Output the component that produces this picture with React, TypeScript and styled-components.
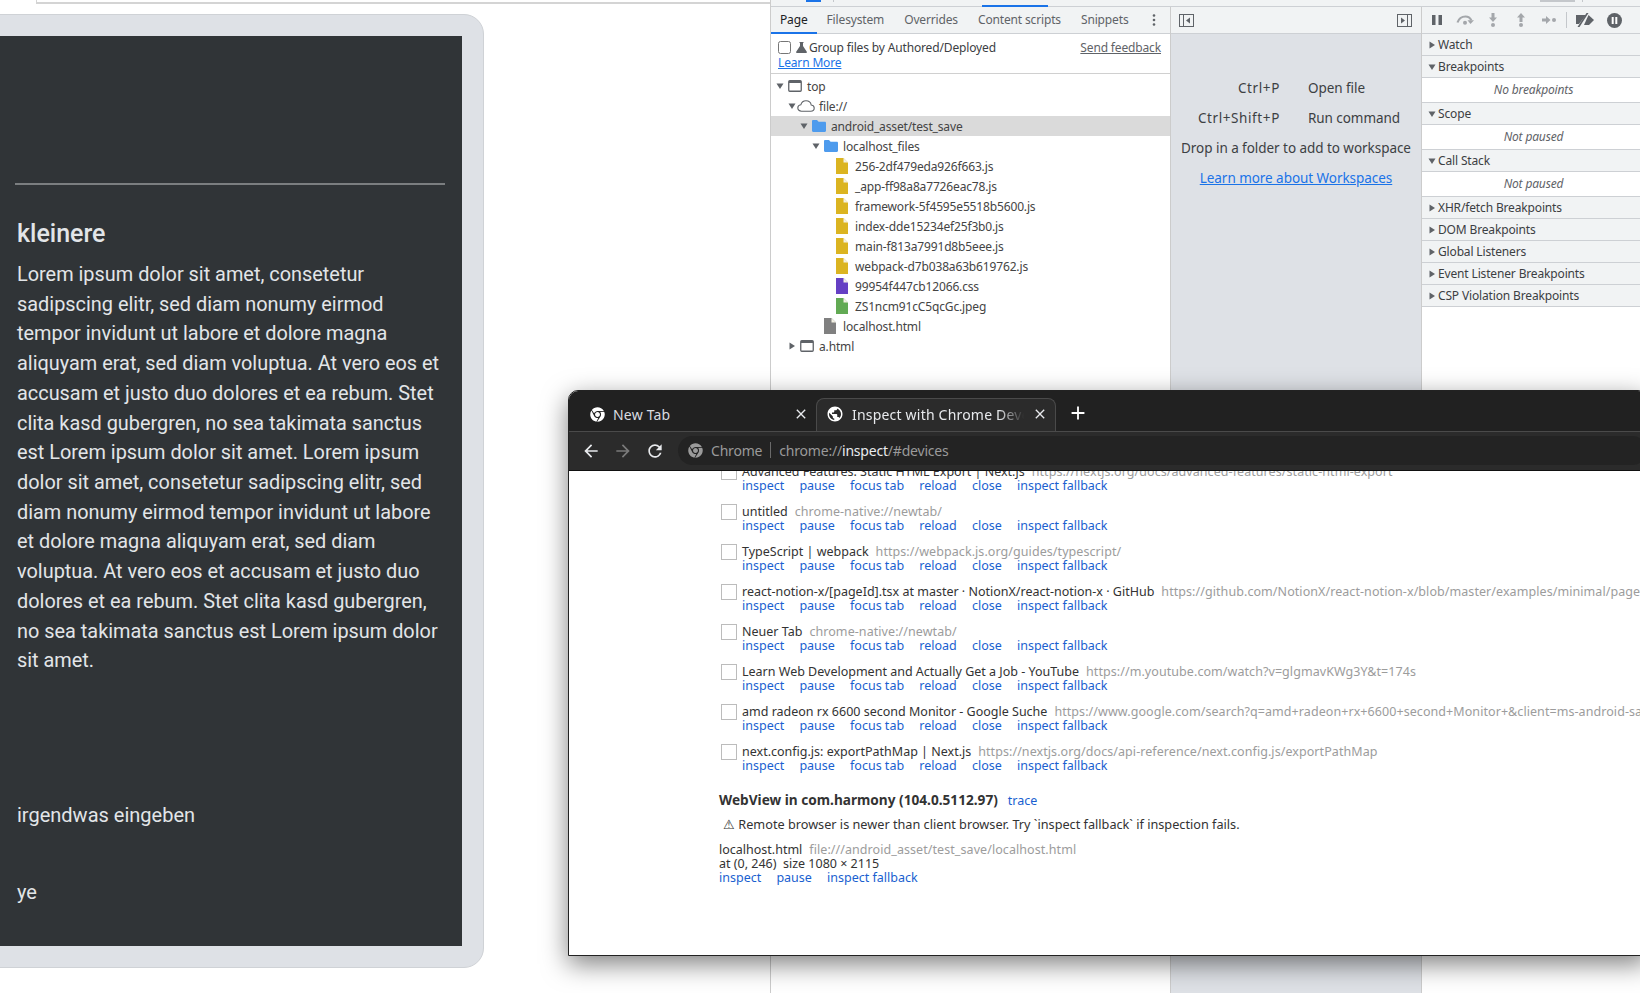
import React from 'react'
import styled, { createGlobalStyle } from 'styled-components'
import { FaChrome } from 'react-icons/fa'
import { MdAdd, MdArrowBack, MdArrowForward, MdClose, MdPublic, MdRefresh } from 'react-icons/md'

const GlobalStyle = createGlobalStyle`
  html, body {
    margin: 0;
    padding: 0;
    background: #fff;
    overflow: hidden;
  }
  * {
    box-sizing: border-box;
  }
`

const UI_FONT = `"Noto Sans", "Open Sans", sans-serif`

const Page = styled.div`
  position: relative;
  display: flex;
  width: 1640px;
  height: 993px;
  overflow: hidden;
  background: #fff;
  font-family: ${UI_FONT};
`

/* left half: the device preview */
const PreviewPane = styled.div`
  width: 770px;
  flex: none;
  display: flex;
  flex-direction: column;
`

const PreviewTopBar = styled.div`
  height: 4px;
  margin-left: 36px;
  border-left: 1px solid #d4d4d4;
  border-bottom: 2px solid #d4d4d4;
`

const DeviceFrame = styled.div`
  width: 514px;
  height: 954px;
  margin: 10px 0 0 -30px;
  padding: 21px 21px 21px 29px;
  background: #dee1e6;
  border: 1px solid #cfd2d6;
  border-radius: 20px;
`

const DeviceScreen = styled.div`
  height: 100%;
  padding: 0 0 0 17px;
  overflow: hidden;
  background: #303437;
  color: #e2e5e8;
  font-family: Roboto, sans-serif;
`

const ScreenDivider = styled.div`
  width: 430px;
  height: 2px;
  margin: 147px 0 0 -2px;
  background: #7b7e80;
`

const ScreenHeading = styled.h2`
  margin: 33px 0 0;
  font-size: 25px;
  line-height: 32px;
  font-weight: 500;
`

const ScreenBody = styled.p`
  width: 424px;
  margin: 10px 0 0;
  font-size: 19.9px;
  line-height: 29.72px;
`

const ScreenLine = styled.p<{ $gap: number }>`
  margin: ${(p) => p.$gap}px 0 0;
  font-size: 20px;
  line-height: 30px;
`

/* devtools */
const DevTools = styled.div`
  flex: 1;
  display: flex;
  flex-direction: column;
  border-left: 1px solid #ccc;
  background: #fff;
  color: #3c4043;
  font-size: 12px;
  letter-spacing: -0.15px;
`

const MainTabStrip = styled.div`
  position: relative;
  height: 7px;
  flex: none;
  background: #f1f3f4;
  border-bottom: 1px solid #cdd0d4;
`

const MainTabUnderline = styled.div`
  position: absolute;
  left: 211px;
  bottom: -1px;
  width: 66px;
  height: 2px;
  background: #1a73e8;
`

const StripMark = styled.div<{ $left: number; $width: number; $color: string }>`
  position: absolute;
  top: 0;
  left: ${(p) => p.$left}px;
  width: ${(p) => p.$width}px;
  height: 2px;
  background: ${(p) => p.$color};
`

const Panels = styled.div`
  flex: 1;
  display: grid;
  grid-template-columns: 399px 251px 1fr;
  min-height: 0;
`

const Panel = styled.div<{ $bg?: string }>`
  display: flex;
  flex-direction: column;
  min-width: 0;
  background: ${(p) => p.$bg || '#fff'};
  & + & {
    border-left: 1px solid #ccc;
  }
`

const ToolBar = styled.div`
  height: 27px;
  flex: none;
  display: flex;
  align-items: center;
  background: #f1f3f4;
  border-bottom: 1px solid #cdd0d4;
`

const NavTab = styled.div<{ $active?: boolean }>`
  align-self: stretch;
  display: flex;
  align-items: center;
  padding: 0 ${(p) => (p.$active ? 9 : 10)}px;
  margin-bottom: -1px;
  color: ${(p) => (p.$active ? '#202124' : '#5f6368')};
  border-bottom: 2px solid ${(p) => (p.$active ? '#1a73e8' : 'transparent')};
  white-space: nowrap;
`

const ToolSpacer = styled.div`
  flex: 1;
`

const GroupBar = styled.div`
  height: 40px;
  flex: none;
  padding: 6px 9px 0 7px;
  border-bottom: 1px solid #d0d0d0;
  line-height: 15px;
`

const GroupRow = styled.div`
  display: flex;
  align-items: center;
  height: 15px;
`

const FakeCheck = styled.span`
  width: 13px;
  height: 13px;
  margin-right: 5px;
  background: #fff;
  border: 1px solid #767676;
  border-radius: 2.5px;
`

const GroupLabel = styled.span`
  margin-left: 2px;
`

const FeedbackLink = styled.span`
  margin-left: auto;
  color: #5f6368;
  text-decoration: underline;
`

const BlueLink = styled.span`
  color: #1a73e8;
  text-decoration: underline;
`

const Tree = styled.div`
  padding-top: 2px;
`

const TreeRow = styled.div<{ $depth: number; $selected?: boolean }>`
  height: 20px;
  display: flex;
  align-items: center;
  padding-left: ${(p) => 5 + p.$depth * 12}px;
  background: ${(p) => (p.$selected ? '#dadada' : 'transparent')};
  white-space: nowrap;
`

const TreeArrowSlot = styled.span`
  width: 12px;
  flex: none;
  display: flex;
  align-items: center;
`

const TreeLabel = styled.span<{ $file?: boolean }>`
  margin-left: ${(p) => (p.$file ? 7 : 5)}px;
  color: #444;
`

const CloudSlot = styled.span`
  display: flex;
  margin: 0 -1px 0 -3px;
`

const CenterHelp = styled.div`
  flex: 1;
  display: flex;
  flex-direction: column;
  align-items: center;
  padding-top: 44px;
  background: #dee1e6;
  font-size: 13.5px;
  line-height: 20px;
  letter-spacing: -0.05px;
  color: #3c4043;
`

const ShortcutGrid = styled.div`
  display: grid;
  grid-template-columns: 92px auto;
  column-gap: 28px;
  row-gap: 10px;
  margin-right: 4px;
`

const ShortcutKey = styled.span`
  text-align: right;
  white-space: nowrap;
  letter-spacing: 0.6px;
`

const HelpLine = styled.div`
  margin-top: 10px;
  white-space: nowrap;
`

const DebugIcon = styled.span<{ $left?: number; $right?: number }>`
  display: flex;
  margin-left: ${(p) => p.$left || 0}px;
  margin-right: ${(p) => p.$right || 0}px;
`

const DebugDivider = styled.span`
  width: 1px;
  height: 16px;
  margin-left: 10px;
  background: #c4c7cb;
`

const SectionHeader = styled.div`
  height: 22px;
  flex: none;
  display: flex;
  align-items: center;
  padding-left: 6px;
  gap: 2px;
  background: #f1f3f4;
  border-bottom: 1px solid #cdd0d4;
  color: #3c4043;
`

const SectionBody = styled.div`
  height: 25px;
  flex: none;
  display: flex;
  align-items: center;
  justify-content: center;
  padding: 0 0 2px 5px;
  border-bottom: 1px solid #cdd0d4;
  font-style: italic;
  color: #5f6368;
`

/* floating browser window */
const BrowserWindow = styled.div`
  position: absolute;
  left: 568px;
  top: 390px;
  width: 1080px;
  height: 566px;
  display: flex;
  flex-direction: column;
  background: #fff;
  border: 1px solid #222;
  border-radius: 10px 10px 0 0;
  box-shadow: 0 8px 26px rgba(0, 0, 0, 0.5);
  font-size: 12.5px;
  overflow: hidden;
`

const BrowserTabs = styled.div`
  height: 40px;
  flex: none;
  display: flex;
  align-items: flex-end;
  padding-left: 8px;
  background: #212121;
  color: #dadce0;
  font-size: 14px;
`

const BrowserTab = styled.div<{ $active?: boolean; $width: number }>`
  width: ${(p) => p.$width}px;
  height: 33px;
  display: flex;
  align-items: center;
  gap: 8px;
  padding: 0 ${(p) => (p.$active ? 7 : 6)}px 2px ${(p) => (p.$active ? 9 : 12)}px;
  background: ${(p) => (p.$active ? '#2b2b2b' : 'transparent')};
  border: 1px solid ${(p) => (p.$active ? '#4a4a4a' : 'transparent')};
  border-bottom: none;
  border-radius: 8px 8px 0 0;
  color: ${(p) => (p.$active ? '#e8eaed' : '#dadce0')};
  white-space: nowrap;
  letter-spacing: 0.2px;
`

const TabTitle = styled.span<{ $fade?: boolean }>`
  flex: 1;
  min-width: 0;
  overflow: hidden;
  ${(p) => (p.$fade ? 'mask-image: linear-gradient(to right, #000 85%, transparent 100%);' : '')}
`

const NewTabButton = styled.span`
  display: flex;
  margin: 0 0 7px 11px;
  color: #fff;
`

const BrowserToolbar = styled.div`
  height: 40px;
  flex: none;
  display: flex;
  align-items: center;
  padding: 0 0 1px 12px;
  gap: 12px;
  background: #2b2b2b;
  border-top: 1px solid #4a4a4a;
  border-bottom: 1px solid #111;
`

const NavButton = styled.span<{ $dim?: boolean }>`
  display: flex;
  color: ${(p) => (p.$dim ? '#7a7a7a' : '#e8eaed')};
`

const AddressBar = styled.div`
  flex: 1;
  height: 29px;
  display: flex;
  align-items: center;
  padding: 0 0 1px 10px;
  margin-left: 1px;
  gap: 8px;
  border-radius: 15px;
  background: #232323;
  color: #9a9a9a;
  font-size: 14px;
  letter-spacing: -0.2px;
`

const AddressDivider = styled.span`
  width: 1px;
  height: 16px;
  background: #6a6a6a;
`

const AddressStrong = styled.span`
  color: #e8eaed;
`

const BrowserContent = styled.div`
  flex: 1;
  min-height: 0;
  overflow: hidden;
  padding-left: 150px;
  color: #333;
  line-height: 14px;
`

const TargetList = styled.div`
  margin: -6px 0 0 2px;
`

const TargetRow = styled.div`
  display: flex;
  height: 40px;
`

const TargetCheck = styled.span`
  width: 16px;
  height: 16px;
  flex: none;
  margin: -1px 5px 0 0;
  background: #fff;
  border: 1px solid #bcbcbc;
`

const TargetText = styled.div`
  min-width: 0;
  white-space: nowrap;
`

const TargetTitle = styled.span`
  margin-right: 7px;
`

const TargetUrl = styled.span`
  color: #9c9c9c;
  letter-spacing: 0.07px;
`

const LinkRow = styled.div`
  display: flex;
  gap: 15.2px;
  color: #1a5fd0;
  white-space: nowrap;
`

const WebViewHeading = styled.div`
  display: flex;
  align-items: baseline;
  gap: 10px;
  margin-top: 6px;
  font-size: 13.65px;
  line-height: 18px;
  font-weight: 700;
`

const TraceLink = styled.span`
  color: #1a5fd0;
  font-weight: 400;
  font-size: 12.5px;
`

const WarningLine = styled.div`
  margin: 7px 0 12px 4px;
  font-size: 12.7px;
  white-space: nowrap;
`

const FILES = [
  { name: '256-2df479eda926f663.js', color: '#dbb421' },
  { name: '_app-ff98a8a7726eac78.js', color: '#dbb421' },
  { name: 'framework-5f4595e5518b5600.js', color: '#dbb421' },
  { name: 'index-dde15234ef25f3b0.js', color: '#dbb421' },
  { name: 'main-f813a7991d8b5eee.js', color: '#dbb421' },
  { name: 'webpack-d7b038a63b619762.js', color: '#dbb421' },
  { name: '99954f447cb12066.css', color: '#6540c4' },
  { name: 'ZS1ncm91cC5qcGc.jpeg', color: '#62aa54' },
]

const TARGETS = [
  { title: 'Advanced Features: Static HTML Export | Next.js', url: 'https://nextjs.org/docs/advanced-features/static-html-export' },
  { title: 'untitled', url: 'chrome-native://newtab/' },
  { title: 'TypeScript | webpack', url: 'https://webpack.js.org/guides/typescript/' },
  { title: 'react-notion-x/[pageId].tsx at master · NotionX/react-notion-x · GitHub', url: 'https://github.com/NotionX/react-notion-x/blob/master/examples/minimal/pages/[pageId].tsx' },
  { title: 'Neuer Tab', url: 'chrome-native://newtab/' },
  { title: 'Learn Web Development and Actually Get a Job - YouTube', url: 'https://m.youtube.com/watch?v=glgmavKWg3Y&t=174s' },
  { title: 'amd radeon rx 6600 second Monitor - Google Suche', url: 'https://www.google.com/search?q=amd+radeon+rx+6600+second+Monitor+&client=ms-android-samsung' },
  { title: 'next.config.js: exportPathMap | Next.js', url: 'https://nextjs.org/docs/api-reference/next.config.js/exportPathMap' },
]

const SECTIONS_BOTTOM = ['XHR/fetch Breakpoints', 'DOM Breakpoints', 'Global Listeners', 'Event Listener Breakpoints', 'CSP Violation Breakpoints']

const Arrow = ({ open }: { open?: boolean }) => (
  <svg width="8" height="8" viewBox="0 0 8 8" fill="#5f6368">
    {open ? <path d="M0.5 1.5h7L4 7z" /> : <path d="M1.5 0.5v7L7 4z" />}
  </svg>
)

const FrameIcon = () => (
  <svg width="14" height="12" viewBox="0 0 14 12" fill="none" stroke="#5f6368">
    <rect x="0.75" y="0.75" width="12.5" height="10.5" rx="1" strokeWidth="1.3" />
    <path d="M1 2h12" strokeWidth="2" />
  </svg>
)

const CloudIcon = () => (
  <svg width="18" height="12" viewBox="0 0 18 12" fill="none" stroke="#5f6368" strokeWidth="1.1">
    <path d="M4.500 11.200C2.400 11.200 0.800 9.800 0.800 8c0-1.700 1.300-3 3-3.200C4.500 2.500 6.600 0.800 9 0.800c2.700 0 4.800 1.800 5.200 4.200 1.700 0.200 3 1.400 3 3 0 1.800-1.500 3.200-3.400 3.200z" />
  </svg>
)

const FolderIcon = () => (
  <svg width="14" height="12" viewBox="0 0 14 12" fill="#4e9bed">
    <path d="M0 1.200C0 0.500 0.500 0 1.200 0h3.800l1.600 1.800h6.200c0.700 0 1.200 0.500 1.200 1.200v7.800c0 0.700-0.500 1.200-1.200 1.200H1.200C0.500 12 0 11.500 0 10.800z" />
  </svg>
)

const FileIcon = ({ color }: { color: string }) => (
  <svg width="12" height="16" viewBox="0 0 12 16">
    <path d="M0 0h7.500L12 4.500V16H0z" fill={color} />
    <path d="M7.500 0L12 4.500H7.500z" fill="#f3f1e4" />
  </svg>
)

const FlaskIcon = () => (
  <svg width="11" height="11" viewBox="0 0 11 11" fill="#5f6368">
    <path d="M3.500 0h4v1H7v3l3.800 5.800c0.300 0.500 0 1.200-0.700 1.200H0.900C0.200 11-0.100 10.300 0.200 9.800L4 4V1h-0.500z" />
  </svg>
)

const DotsIcon = () => (
  <svg width="4" height="12" viewBox="0 0 4 12" fill="#5f6368">
    <circle cx="2" cy="1.500" r="1.300" />
    <circle cx="2" cy="6" r="1.300" />
    <circle cx="2" cy="10.500" r="1.300" />
  </svg>
)

const SidebarToggle = ({ right }: { right?: boolean }) => (
  <svg width="15" height="13" viewBox="0 0 15 13" fill="none">
    <rect x="0.500" y="0.500" width="14" height="12" stroke="#5f6368" />
    {right ? <path d="M10.500 0.500v12" stroke="#5f6368" /> : <path d="M4.500 0.500v12" stroke="#5f6368" />}
    {right ? <path d="M4 3.500v6l4-3z" fill="#5f6368" /> : <path d="M11 3.500v6l-4-3z" fill="#5f6368" />}
  </svg>
)

const PauseIcon = () => (
  <svg width="10" height="10" viewBox="0 0 10 10" fill="#5f6368">
    <rect width="3.500" height="10" />
    <rect x="6.500" width="3.500" height="10" />
  </svg>
)

const StepOverIcon = () => (
  <svg width="18" height="10" viewBox="0 0 18 10" fill="none">
    <path d="M1.500 7.500C3 3 6.500 1.500 9.500 1.500c2.800 0 4.700 1.500 5.800 3.800" stroke="#a4a7ab" strokeWidth="2.200" />
    <path d="M11.500 5.200h6.500l-3.500 3.800z" fill="#a4a7ab" />
    <circle cx="9" cy="7.800" r="2" fill="#a4a7ab" />
  </svg>
)

const StepIntoIcon = ({ up }: { up?: boolean }) => (
  <svg width="8" height="14" viewBox="0 0 8 14" fill="#a4a7ab">
    {up ? (
      <>
        <path d="M4 0l4 4.500H5.500V9h-3V4.500H0z" />
        <circle cx="4" cy="12" r="2" />
      </>
    ) : (
      <>
        <path d="M2.500 0h3v4.500H8l-4 4.500-4-4.500h2.500z" />
        <circle cx="4" cy="12" r="2" />
      </>
    )}
  </svg>
)

const StepIcon = () => (
  <svg width="14" height="8" viewBox="0 0 14 8" fill="#a4a7ab">
    <path d="M0 2.500h4V0l4.500 4L4 8V5.500H0z" />
    <circle cx="12" cy="4" r="2" />
  </svg>
)

const DeactivateIcon = () => (
  <svg width="18" height="14" viewBox="0 0 18 14" fill="#5f6368">
    <path d="M0 2h10l-7 9H0z" />
    <path d="M12.500 2l5.500 5-5 5H8z" />
    <path d="M1.500 14L10.500 0h2L3.500 14z" />
  </svg>
)

const PauseExceptionIcon = () => (
  <svg width="15" height="15" viewBox="0 0 15 15">
    <circle cx="7.500" cy="7.500" r="7.500" fill="#5f6368" />
    <rect x="4.700" y="4" width="2" height="7" fill="#fff" />
    <rect x="8.300" y="4" width="2" height="7" fill="#fff" />
  </svg>
)

const App: React.FC = () => {
  return (
    <Page>
      <GlobalStyle />
      <PreviewPane>
        <PreviewTopBar />
        <DeviceFrame>
          <DeviceScreen>
            <ScreenDivider />
            <ScreenHeading>kleinere</ScreenHeading>
            <ScreenBody>
              Lorem ipsum dolor sit amet, consetetur sadipscing elitr, sed diam nonumy eirmod tempor invidunt ut
              labore et dolore magna aliquyam erat, sed diam voluptua. At vero eos et accusam et justo duo dolores et
              ea rebum. Stet clita kasd gubergren, no sea takimata sanctus est Lorem ipsum dolor sit amet. Lorem ipsum
              dolor sit amet, consetetur sadipscing elitr, sed diam nonumy eirmod tempor invidunt ut labore et dolore
              magna aliquyam erat, sed diam voluptua. At vero eos et accusam et justo duo dolores et ea rebum. Stet
              clita kasd gubergren, no sea takimata sanctus est Lorem ipsum dolor sit amet.
            </ScreenBody>
            <ScreenLine $gap={124}>irgendwas eingeben</ScreenLine>
            <ScreenLine $gap={47}>ye</ScreenLine>
          </DeviceScreen>
        </DeviceFrame>
      </PreviewPane>

      <DevTools>
        <MainTabStrip>
          <StripMark $left={35} $width={15} $color="#1a73e8" />
          <StripMark $left={62} $width={1} $color="#c4c7cb" />
          <StripMark $left={769} $width={35} $color="#c4c7cb" />
          <StripMark $left={811} $width={1} $color="#c4c7cb" />
          <MainTabUnderline />
        </MainTabStrip>
        <Panels>
          <Panel>
            <ToolBar>
              <NavTab $active>Page</NavTab>
              <NavTab>Filesystem</NavTab>
              <NavTab>Overrides</NavTab>
              <NavTab>Content scripts</NavTab>
              <NavTab>Snippets</NavTab>
              <ToolSpacer />
              <DebugIcon $right={14}>
                <DotsIcon />
              </DebugIcon>
            </ToolBar>
            <GroupBar>
              <GroupRow>
                <FakeCheck />
                <FlaskIcon />
                <GroupLabel>Group files by Authored/Deployed</GroupLabel>
                <FeedbackLink>Send feedback</FeedbackLink>
              </GroupRow>
              <BlueLink>Learn More</BlueLink>
            </GroupBar>
            <Tree>
              <TreeRow $depth={0}>
                <TreeArrowSlot>
                  <Arrow open />
                </TreeArrowSlot>
                <FrameIcon />
                <TreeLabel>top</TreeLabel>
              </TreeRow>
              <TreeRow $depth={1}>
                <TreeArrowSlot>
                  <Arrow open />
                </TreeArrowSlot>
                <CloudSlot>
                  <CloudIcon />
                </CloudSlot>
                <TreeLabel>file://</TreeLabel>
              </TreeRow>
              <TreeRow $depth={2} $selected>
                <TreeArrowSlot>
                  <Arrow open />
                </TreeArrowSlot>
                <FolderIcon />
                <TreeLabel>android_asset/test_save</TreeLabel>
              </TreeRow>
              <TreeRow $depth={3}>
                <TreeArrowSlot>
                  <Arrow open />
                </TreeArrowSlot>
                <FolderIcon />
                <TreeLabel>localhost_files</TreeLabel>
              </TreeRow>
              {FILES.map((file) => (
                <TreeRow $depth={4} key={file.name}>
                  <TreeArrowSlot />
                  <FileIcon color={file.color} />
                  <TreeLabel $file>{file.name}</TreeLabel>
                </TreeRow>
              ))}
              <TreeRow $depth={3}>
                <TreeArrowSlot />
                <FileIcon color="#808080" />
                <TreeLabel $file>localhost.html</TreeLabel>
              </TreeRow>
              <TreeRow $depth={1}>
                <TreeArrowSlot>
                  <Arrow />
                </TreeArrowSlot>
                <FrameIcon />
                <TreeLabel>a.html</TreeLabel>
              </TreeRow>
            </Tree>
          </Panel>

          <Panel $bg="#dee1e6">
            <ToolBar>
              <DebugIcon $left={8}>
                <SidebarToggle />
              </DebugIcon>
              <ToolSpacer />
              <DebugIcon $right={9}>
                <SidebarToggle right />
              </DebugIcon>
            </ToolBar>
            <CenterHelp>
              <ShortcutGrid>
                <ShortcutKey>Ctrl+P</ShortcutKey>
                <span>Open file</span>
                <ShortcutKey>Ctrl+Shift+P</ShortcutKey>
                <span>Run command</span>
              </ShortcutGrid>
              <HelpLine>Drop in a folder to add to workspace</HelpLine>
              <HelpLine>
                <BlueLink>Learn more about Workspaces</BlueLink>
              </HelpLine>
            </CenterHelp>
          </Panel>

          <Panel>
            <ToolBar>
              <DebugIcon $left={10}>
                <PauseIcon />
              </DebugIcon>
              <DebugIcon $left={14}>
                <StepOverIcon />
              </DebugIcon>
              <DebugIcon $left={15}>
                <StepIntoIcon />
              </DebugIcon>
              <DebugIcon $left={20}>
                <StepIntoIcon up />
              </DebugIcon>
              <DebugIcon $left={17}>
                <StepIcon />
              </DebugIcon>
              <DebugDivider />
              <DebugIcon $left={9}>
                <DeactivateIcon />
              </DebugIcon>
              <DebugIcon $left={13}>
                <PauseExceptionIcon />
              </DebugIcon>
            </ToolBar>
            <SectionHeader>
              <Arrow />
              Watch
            </SectionHeader>
            <SectionHeader>
              <Arrow open />
              Breakpoints
            </SectionHeader>
            <SectionBody>No breakpoints</SectionBody>
            <SectionHeader>
              <Arrow open />
              Scope
            </SectionHeader>
            <SectionBody>Not paused</SectionBody>
            <SectionHeader>
              <Arrow open />
              Call Stack
            </SectionHeader>
            <SectionBody>Not paused</SectionBody>
            {SECTIONS_BOTTOM.map((name) => (
              <SectionHeader key={name}>
                <Arrow />
                {name}
              </SectionHeader>
            ))}
          </Panel>
        </Panels>
      </DevTools>

      <BrowserWindow>
        <BrowserTabs>
          <BrowserTab $width={239}>
            <FaChrome size={15} color="#fff" />
            <TabTitle>New Tab</TabTitle>
            <MdClose size={16} color="#e8eaed" />
          </BrowserTab>
          <BrowserTab $active $width={240}>
            <MdPublic size={18} color="#fff" />
            <TabTitle $fade>Inspect with Chrome Developer Tools</TabTitle>
            <MdClose size={16} color="#e8eaed" />
          </BrowserTab>
          <NewTabButton>
            <MdAdd size={22} />
          </NewTabButton>
        </BrowserTabs>
        <BrowserToolbar>
          <NavButton>
            <MdArrowBack size={20} />
          </NavButton>
          <NavButton $dim>
            <MdArrowForward size={20} />
          </NavButton>
          <NavButton>
            <MdRefresh size={20} />
          </NavButton>
          <AddressBar>
            <FaChrome size={15} color="#9a9a9a" />
            <span>Chrome</span>
            <AddressDivider />
            <span>
              chrome://<AddressStrong>inspect</AddressStrong>/#devices
            </span>
          </AddressBar>
        </BrowserToolbar>
        <BrowserContent>
          <TargetList>
            {TARGETS.map((target) => (
              <TargetRow key={target.title}>
                <TargetCheck />
                <TargetText>
                  <div>
                    <TargetTitle>{target.title}</TargetTitle>
                    <TargetUrl>{target.url}</TargetUrl>
                  </div>
                  <LinkRow>
                    <span>inspect</span>
                    <span>pause</span>
                    <span>focus tab</span>
                    <span>reload</span>
                    <span>close</span>
                    <span>inspect fallback</span>
                  </LinkRow>
                </TargetText>
              </TargetRow>
            ))}
          </TargetList>
          <WebViewHeading>
            WebView in com.harmony (104.0.5112.97)
            <TraceLink>trace</TraceLink>
          </WebViewHeading>
          <WarningLine>⚠ Remote browser is newer than client browser. Try `inspect fallback` if inspection fails.</WarningLine>
          <div>
            <TargetTitle>localhost.html</TargetTitle>
            <TargetUrl>file:///android_asset/test_save/localhost.html</TargetUrl>
          </div>
          <div>at (0, 246)&nbsp; size 1080 × 2115</div>
          <LinkRow>
            <span>inspect</span>
            <span>pause</span>
            <span>inspect fallback</span>
          </LinkRow>
        </BrowserContent>
      </BrowserWindow>
    </Page>
  )
}

export default App
